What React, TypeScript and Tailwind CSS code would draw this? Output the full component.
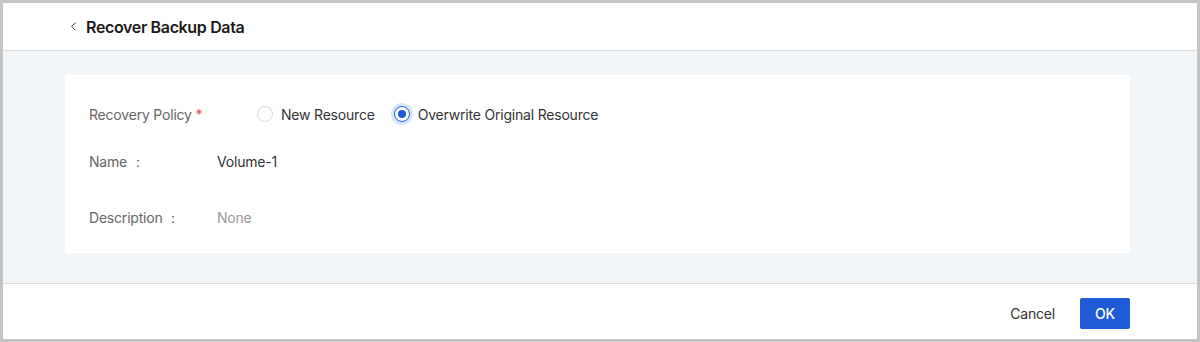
import { ChevronLeft } from 'lucide-react';

const font = { fontFamily: 'Inter, "Noto Sans", sans-serif' };

function Radio({ checked, label }: { checked?: boolean; label: string }) {
  return (
    <label className="flex items-center gap-[8px] cursor-pointer">
      {checked ? (
        <span className="flex h-[16px] w-[16px] items-center justify-center rounded-full border border-[#1f5bd6] bg-white ring-[3px] ring-[#d6e6fb]">
          <span className="h-[8px] w-[8px] rounded-full bg-[#1f5bd6]" />
        </span>
      ) : (
        <span className="h-[16px] w-[16px] rounded-full border border-[#d9d9d9] bg-white" />
      )}
      <span className="text-[14px] text-[#333]">{label}</span>
    </label>
  );
}

export default function App() {
  return (
    <div style={font} className="w-[1200px] h-[342px] border-[3px] border-[#c4c4c4] bg-white flex flex-col tracking-[-0.2px]">
      <header className="h-[48px] border-b border-[#dcdcdc] flex items-center pl-[63px] gap-[5px]">
        <ChevronLeft size={15} strokeWidth={1.5} className="text-[#333]" />
        <h1 className="text-[16px] font-semibold text-[#1a1a1a] tracking-[-0.35px]">Recover Backup Data</h1>
      </header>

      <main className="h-[232px] bg-[#f3f6f9] pt-[24px] pl-[62px]">
        <div className="w-[1065px] h-[178px] bg-white pl-[24px] pt-[27px]">
          <div className="flex items-center h-[24px]">
            <div className="w-[168px] text-[14px] text-[#666]">
              Recovery Policy <span className="text-[#e5484d]">*</span>
            </div>
            <div className="flex items-center gap-[19px]">
              <Radio label="New Resource" />
              <Radio checked label="Overwrite Original Resource" />
            </div>
          </div>
          <div className="flex items-center h-[24px] mt-[23px]">
            <div className="w-[128px] text-[14px] text-[#666]">Name ：</div>
            <div className="text-[14px] text-[#333]">Volume-1</div>
          </div>
          <div className="flex items-center h-[24px] mt-[32px]">
            <div className="w-[128px] text-[14px] text-[#666]">Description ：</div>
            <div className="text-[14px] text-[#999]">None</div>
          </div>
        </div>
      </main>

      <footer className="flex-1 border-t border-[#dcdcdc] flex items-center justify-end pr-[67px] pt-[4px] gap-[23px]">
        <button className="text-[14px] text-[#333] px-[2px]">Cancel</button>
        <button className="h-[31px] w-[50px] rounded-[2px] bg-[#1f5bd6] text-white text-[14px] font-medium">OK</button>
      </footer>
    </div>
  );
}
